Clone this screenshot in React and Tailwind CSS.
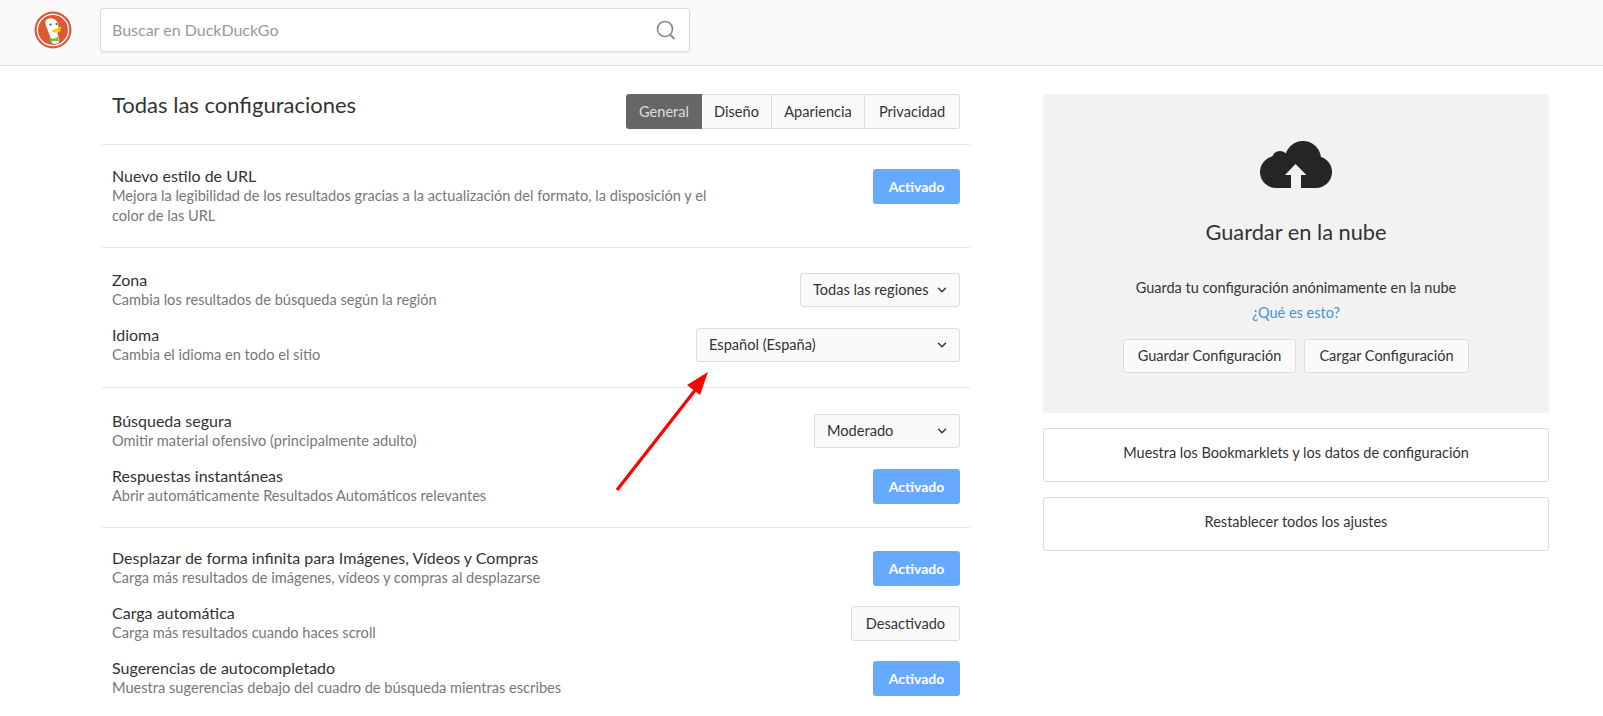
import { ChevronDown } from 'lucide-react';

function Logo() {
  return (
    <svg width="38" height="38" viewBox="0 0 38 38">
      <circle cx="19" cy="19" r="18.5" fill="#de5833" />
      <circle cx="19" cy="19" r="15.6" fill="none" stroke="#fff" strokeWidth="1.3" />
      <path d="M12 9c3-2.5 8-2.5 10.5 1 1.5 2 2 4.500 2 6.500l-1 6c1 3 1.500 6 1.500 9-2.500 1.500-5 1.500-7 1-.5-5-3-9-4.500-14C12 15 10.500 11 12 9z" fill="#fff" />
      <circle cx="16.500" cy="13.500" r="1.100" fill="#2d4f8e" />
      <circle cx="22.500" cy="13" r="0.900" fill="#2d4f8e" />
      <path d="M18 19.500c2.500-1.800 6-2.800 9-3.500.8 0 .8 1.200-.2 1.800l-2.800 1.200 3-.2c.4.800-.4 1.500-1.500 1.900-2 .7-4.500 1-6.500.6-.5-.4-1-1.200-1-1.800z" fill="#fdd20a" />
      <path d="M15 26.500l3.500 1.200 2-.2 3.500-1.500.5 4.500-3.500-.8-2.500.2-3 1z" fill="#65bc46" />
    </svg>
  );
}

function CloudIcon() {
  return (
    <svg width="72" height="47" viewBox="0 0 72 47">
      <g fill="#252525">
        <circle cx="16" cy="31" r="16" />
        <circle cx="56" cy="31" r="16" />
        <circle cx="43" cy="18" r="18" />
        <circle cx="20" cy="18" r="8" />
        <rect x="16" y="22" width="40" height="25" />
      </g>
      <path d="M35.500 23L46.500 34H41V47H31V34H25z" fill="#f2f2f2" />
    </svg>
  );
}

function Row({ title, desc, children }) {
  return (
    <div className="flex justify-between items-start h-[35px] mb-[20px]">
      <div>
        <div className="text-[16px] leading-[20px] text-[#333] mt-[-3px]">{title}</div>
        <div className="text-[14.6px] leading-[20px] text-[#777]">{desc}</div>
      </div>
      {children}
    </div>
  );
}

function OnButton() {
  return (
    <button className="w-[87px] h-[35px] rounded-[3px] bg-[#66aaff] text-white text-[14px] font-bold">Activado</button>
  );
}

function Select({ label, width }) {
  return (
    <div className={`${width} h-[34px] flex items-center justify-between pl-3 pr-[10px] rounded-[3px] border border-[#dcdcdc] bg-[#fafafa] text-[14.6px] text-[#333]`}>
      <span>{label}</span>
      <ChevronDown size={14} strokeWidth={2.5} />
    </div>
  );
}

const tabs = [
  { label: 'General', cls: 'w-[76px] rounded-l-[3px] bg-[#666] text-[#ddd]' },
  { label: 'Diseño', cls: 'w-[70px] bg-[#fafafa] border border-l-0 border-[#dcdcdc]' },
  { label: 'Apariencia', cls: 'w-[93px] bg-[#fafafa] border border-l-0 border-[#dcdcdc]' },
  { label: 'Privacidad', cls: 'w-[95px] rounded-r-[3px] bg-[#fafafa] border border-l-0 border-[#dcdcdc]' },
];

export default function App() {
  return (
    <div className="relative h-[716px] overflow-hidden bg-white font-['Lato','Noto_Sans',sans-serif]">
      {/* cabecera */}
      <div className="h-[66px] bg-[#fafafa] border-b border-[#dcdcdc] flex items-start pl-[34px] pt-[11px]">
        <Logo />
        <div className="ml-[28px] mt-[-3px] w-[590px] h-[44px] bg-white rounded-[3px] border border-[#dcdcdc] shadow-[0_1px_2px_rgba(0,0,0,0.08)] flex items-center justify-between pl-[11px] pr-[13px] pb-px">
          <span className="text-[16px] text-[#999]">Buscar en DuckDuckGo</span>
          <svg width="20" height="20" viewBox="0 0 20 20" fill="none" stroke="#8a9090" strokeWidth="1.700">
            <circle cx="9" cy="9" r="7.500" />
            <path d="M14 14.500l4.500 4.500" strokeWidth="2.200" />
          </svg>
        </div>
      </div>

      <div className="flex items-start pl-[102px] pt-[28px]">
        {/* columna izquierda */}
        <div className="w-[868px]">
          <div className="flex justify-between items-start h-[50px] px-[10px] border-b border-[#e8e8e8] box-content">
            <h1 className="text-[22px] leading-[28px] mt-[-3px] text-[#333]">Todas las configuraciones</h1>
            <div className="flex h-[35px] text-[14.6px] text-[#333]">
              {tabs.map((t) => (
                <div key={t.label} className={`flex items-center justify-center ${t.cls}`}>{t.label}</div>
              ))}
            </div>
          </div>

          <div className="h-[78px] px-[10px] pt-[24px] border-b border-[#e8e8e8] flex justify-between items-start box-content">
            <div className="w-[610px]">
              <div className="text-[16px] leading-[20px] text-[#333] mt-[-3px]">Nuevo estilo de URL</div>
              <div className="text-[14.6px] leading-[20px] text-[#777]">Mejora la legibilidad de los resultados gracias a la actualización del formato, la disposición y el color de las URL</div>
            </div>
            <OnButton />
          </div>

          <div className="px-[10px] pt-[25px] h-[140px] border-b border-[#e8e8e8]">
            <Row title="Zona" desc="Cambia los resultados de búsqueda según la región">
              <Select label="Todas las regiones" width="w-[160px]" />
            </Row>
            <Row title="Idioma" desc="Cambia el idioma en todo el sitio">
              <Select label="Español (España)" width="w-[264px]" />
            </Row>
          </div>

          <div className="px-[10px] pt-[26px] h-[140px] border-b border-[#e8e8e8]">
            <Row title="Búsqueda segura" desc="Omitir material ofensivo (principalmente adulto)">
              <Select label="Moderado" width="w-[146px]" />
            </Row>
            <Row title="Respuestas instantáneas" desc="Abrir automáticamente Resultados Automáticos relevantes">
              <OnButton />
            </Row>
          </div>

          <div className="px-[10px] pt-[23px]">
            <Row title="Desplazar de forma infinita para Imágenes, Vídeos y Compras" desc="Carga más resultados de imágenes, vídeos y compras al desplazarse">
              <OnButton />
            </Row>
            <Row title="Carga automática" desc="Carga más resultados cuando haces scroll">
              <button className="w-[109px] h-[35px] rounded-[3px] border border-[#dcdcdc] bg-[#fafafa] text-[14.6px] text-[#333]">Desactivado</button>
            </Row>
            <Row title="Sugerencias de autocompletado" desc="Muestra sugerencias debajo del cuadro de búsqueda mientras escribes">
              <OnButton />
            </Row>
          </div>
        </div>

        {/* columna derecha */}
        <div className="ml-[73px] w-[506px]">
          <div className="h-[319px] rounded-[3px] bg-[#f2f2f2] flex flex-col items-center pt-[47px]">
            <CloudIcon />
            <div className="mt-[30px] text-[21.8px] leading-[28px] text-[#333]">Guardar en la nube</div>
            <div className="mt-[32px] text-[14.5px] leading-[20px] text-[#333]">Guarda tu configuración anónimamente en la nube</div>
            <div className="mt-[5px] text-[14.5px] leading-[20px] text-[#4495d4]">¿Qué es esto?</div>
            <div className="mt-[16px] flex gap-2">
              <button className="w-[173px] h-[34px] rounded-[3px] border border-[#dcdcdc] bg-[#fafafa] text-[14.5px] text-[#333]">Guardar Configuración</button>
              <button className="w-[165px] h-[34px] rounded-[3px] border border-[#dcdcdc] bg-[#fafafa] text-[14.5px] text-[#333]">Cargar Configuración</button>
            </div>
          </div>
          <div className="mt-[15px] h-[54px] pb-[4px] rounded-[3px] border border-[#dcdcdc] flex items-center justify-center text-[14.5px] text-[#333]">Muestra los Bookmarklets y los datos de configuración</div>
          <div className="mt-[15px] h-[54px] pb-[4px] rounded-[3px] border border-[#dcdcdc] flex items-center justify-center text-[14.5px] text-[#333]">Restablecer todos los ajustes</div>
        </div>
      </div>

      {/* flecha roja sobre la captura */}
      <svg className="absolute left-[600px] top-[360px]" width="120" height="140" viewBox="0 0 120 140">
        <path d="M17 130L100 24" stroke="#ff0000" strokeWidth="3.200" />
        <path d="M108 12L87 25L100 35z" fill="#ff0000" />
      </svg>
    </div>
  );
}
